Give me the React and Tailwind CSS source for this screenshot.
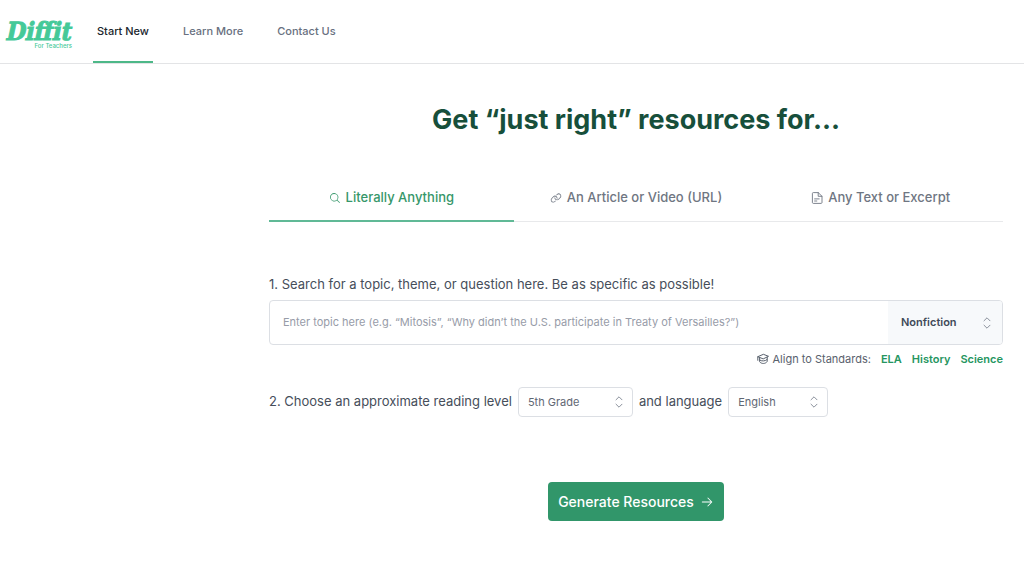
import { PiMagnifyingGlass, PiLink, PiArrowRight } from 'react-icons/pi';

function FileIcon({ className }) {
  return (
    <svg viewBox="0 0 12 12" fill="none" stroke="currentColor" strokeWidth="0.9" strokeLinecap="round" strokeLinejoin="round" aria-hidden="true" className={className}>
      <path d="M7.2.6H2.3a.9.9 0 0 0-.9.9v9c0 .5.4.9.9.9h7.8c.5 0 .9-.4.9-.9V4.3L7.2.6v3.7H11" />
      <path d="M3.6 6.9h4.6M3.6 9h2.2" />
    </svg>
  );
}

function CapIcon({ className }) {
  return (
    <svg viewBox="0 0 12 12" fill="none" stroke="currentColor" strokeWidth="1" strokeLinecap="round" strokeLinejoin="round" aria-hidden="true" className={className}>
      <path d="M.8 3.7 6.4 1.3l5.1 2-5.3 2.6L.8 3.7v3.6" />
      <path d="M2.6 4.6v4.1c1.6 2.4 6.1 2.4 7.6-.3V4.1M2.8 7.1c1.7 1.3 5.5 1.2 7.2-.5" />
    </svg>
  );
}

function UpDown({ className }) {
  return (
    <svg viewBox="0 0 10 12" fill="none" stroke="currentColor" strokeWidth="1" strokeLinecap="round" strokeLinejoin="round" aria-hidden="true" className={`pointer-events-none absolute top-1/2 h-3 w-2.5 -translate-y-1/2 text-[#8b919c] ${className}`}>
      <path d="M2 3.8 5 .8l3 3M2 8.2l3 3 3-3" />
    </svg>
  );
}

function Picker({ label, value, className }) {
  return (
    <div className={`relative ${className}`}>
      <select aria-label={label} defaultValue={value} className="h-[30px] w-full appearance-none rounded border border-[#dcdfe4] bg-white pr-6 pl-[9px] text-[11px] text-[#5f6773]">
        <option>{value}</option>
      </select>
      <UpDown className="right-[9px]" />
    </div>
  );
}

const tabs = [
  { label: 'Literally Anything', Icon: PiMagnifyingGlass, active: true },
  { label: 'An Article or Video (URL)', Icon: PiLink },
  { label: 'Any Text or Excerpt', Icon: FileIcon },
];

export default function App() {
  return (
    <div className="bg-white font-['Inter','Liberation_Sans',sans-serif] text-[#464e5a]">
      <header className="flex h-16 border-b border-[#e3e4e6] pl-1">
        <a href="#home" aria-label="Diffit For Teachers" className="flex w-[68px] flex-col pt-[15px] text-[#45c998]">
          <svg viewBox="0 0 68 27" className="h-[27px] w-[68px] shrink-0 overflow-visible" fill="currentColor" stroke="currentColor" strokeWidth="0.9">
            <text x="1" y="0" transform="translate(0 25) skewX(-12)" fontFamily="'DejaVu Serif Condensed','DejaVu Serif',serif" fontStretch="condensed" fontWeight="700" fontSize="25">Diffit</text>
          </svg>
          <span className="text-right text-[6px] leading-[7px] font-medium">For Teachers</span>
        </a>
        <nav className="ml-[21px] flex gap-[26px] text-[11px] font-medium text-[#687080]">
          <a href="#new" className="flex items-center border-b-2 border-[#4db888] px-1 pt-0.5 text-[#20252d]">Start New</a>
          <a href="#learn" className="flex items-center border-b-2 border-transparent px-1 pt-0.5">Learn More</a>
          <a href="#contact" className="flex items-center border-b-2 border-transparent px-1 pt-0.5">Contact Us</a>
        </nav>
      </header>

      <main className="mr-[21px] ml-[269px]">
        <h1 className="pt-[37px] text-center text-[27px] leading-[38px] font-bold text-[#174f3b]">Get “just right” resources for...</h1>

        <div role="tablist" className="mt-[37px] grid grid-cols-3 border-b border-[#e8e9eb]">
          {tabs.map(({ label, Icon, active }) => (
            <button
              key={label}
              type="button"
              role="tab"
              aria-selected={!!active}
              className={`-mb-px flex h-[46px] items-center justify-center gap-[5px] border-b-2 text-[13px] font-medium ${active ? 'border-[#60b996] text-[#36976a]' : 'border-transparent text-[#6f7682]'}`}
            >
              <Icon className="size-3" aria-hidden="true" />
              {label}
            </button>
          ))}
        </div>

        <form className="pt-[52px]">
          <label htmlFor="topic" className="block text-[13px] leading-5">1. Search for a topic, theme, or question here. Be as specific as possible!</label>
          <div className="mt-1.5 flex h-[45px] overflow-hidden rounded border border-[#dcdfe4]">
            <input id="topic" className="min-w-0 flex-1 px-[13px] text-[11px] placeholder:text-[#979ca8]" placeholder="Enter topic here (e.g. “Mitosis”, “Why didn’t the U.S. participate in Treaty of Versailles?”)" />
            <div className="relative w-[114px]">
              <select aria-label="Genre" className="h-full w-full appearance-none bg-[#f7f9fb] pl-[13px] text-[11px] font-semibold text-[#414958]">
                <option>Nonfiction</option>
              </select>
              <UpDown className="right-2.5" />
            </div>
          </div>
          <div className="mt-[5px] flex items-center justify-end gap-2.5 text-[11px] leading-[18px] font-semibold text-[#26965f]">
            <span className="flex items-center gap-1 font-normal text-[#59616d]">
              <CapIcon className="size-3" />
              Align to Standards:
            </span>
            <a href="#ela">ELA</a>
            <a href="#history">History</a>
            <a href="#science">Science</a>
          </div>
          <div className="mt-[19px] flex items-center gap-1.5 text-[13px]">
            <span>2. Choose an approximate reading level</span>
            <Picker label="Reading level" value="5th Grade" className="w-[115px]" />
            <span>and language</span>
            <Picker label="Language" value="English" className="w-[100px]" />
          </div>
          <div className="mt-[65px] flex justify-center">
            <button type="button" className="flex h-[39px] w-44 items-center justify-center gap-1.5 rounded bg-[#31966a] text-sm font-medium text-white">
              Generate Resources
              <PiArrowRight className="size-3.5" aria-hidden="true" />
            </button>
          </div>
        </form>
      </main>
    </div>
  );
}
